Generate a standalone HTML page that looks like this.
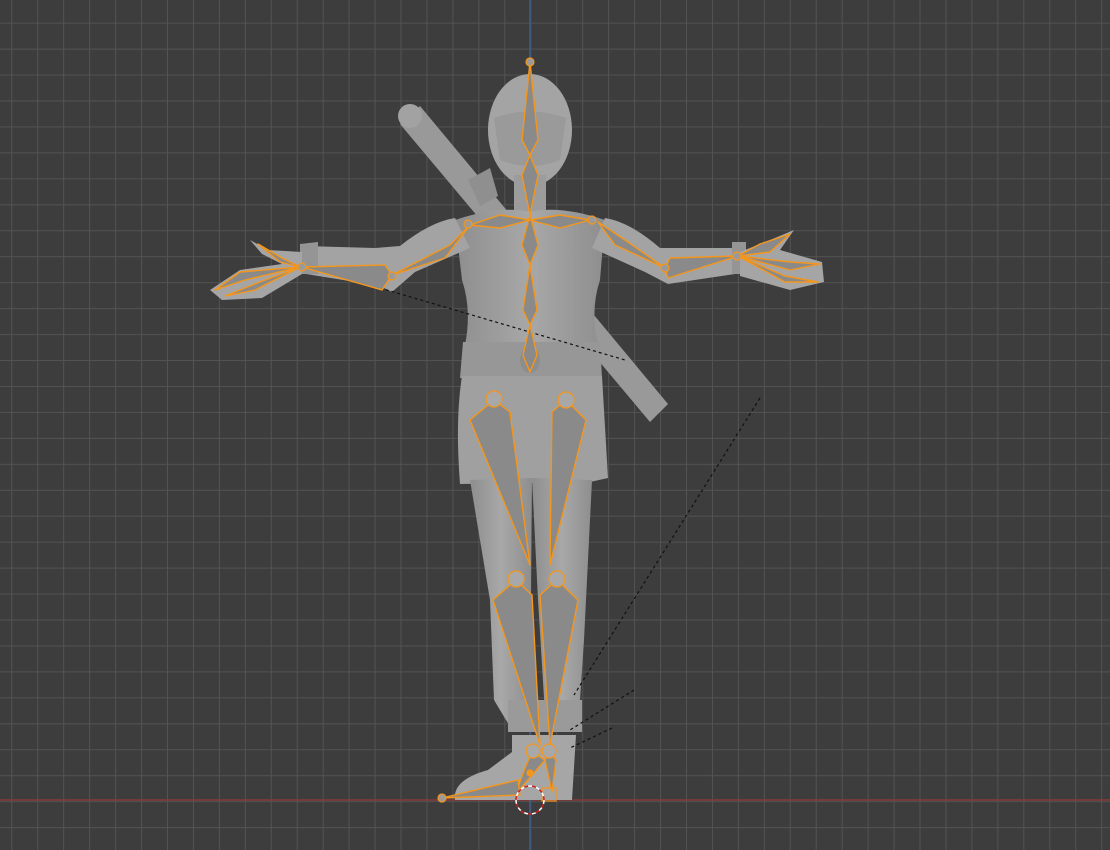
<!DOCTYPE html>
<html><head><style>html,body{margin:0;padding:0;background:#3d3d3d;overflow:hidden}svg{display:block}</style></head>
<body>
<svg width="1110" height="850" viewBox="0 0 1110 850" xmlns="http://www.w3.org/2000/svg">
<defs>
<pattern id="g" x="11.3" y="22.7" width="25.95" height="25.95" patternUnits="userSpaceOnUse">
<path d="M0 0H25.95M0 0V25.95" stroke="#555" stroke-width="1.8" fill="none"/>
</pattern>
<linearGradient id="sk" x1="0" x2="1"><stop offset="0" stop-color="#8e8e8e"/><stop offset="0.5" stop-color="#a8a8a8"/><stop offset="1" stop-color="#8e8e8e"/></linearGradient>
</defs>
<rect width="1110" height="850" fill="#3d3d3d"/>
<rect width="1110" height="850" fill="url(#g)"/>
<line x1="0" y1="800" x2="1110" y2="800" stroke="#8a3a3a" stroke-width="1.5"/>
<line x1="530" y1="0" x2="530" y2="850" stroke="#3d5d8a" stroke-width="1.5"/>
<g fill="#9e9e9e">
<path d="M400 124 L420 106 L668 404 L650 422 Z" fill="#999"/>
<circle cx="410" cy="116" r="12" fill="#a2a2a2"/>
<path d="M468 180 L490 168 L498 196 L480 206 Z" fill="#8f8f8f"/>
<ellipse cx="530" cy="130" rx="42" ry="56" fill="#a4a4a4"/>
<path d="M494 118 Q530 105 566 118 L560 160 Q530 172 500 160 Z" fill="#9a9a9a"/>
<rect x="514" y="175" width="32" height="40" fill="#9c9c9c"/>
<path d="M455 220 Q500 205 530 212 Q560 205 605 220 L600 280 Q590 310 598 345 L465 345 Q472 310 462 280 Z" fill="url(#sk)"/>
<path d="M463 342 L600 342 L602 378 L460 378 Z" fill="#979797"/>
<ellipse cx="530" cy="360" rx="10" ry="13" fill="#8d8d8d"/>
<path d="M462 376 L602 376 L608 478 L590 482 L460 484 Q455 420 462 376 Z" fill="#a0a0a0"/>
<path d="M455 218 L470 248 L415 272 L392 292 L380 286 L306 274 L304 246 L375 248 L400 246 Q430 222 455 218Z" fill="#a3a3a3"/>
<path d="M300 244 L318 242 L318 274 L300 274 Z" fill="#959595"/>
<path d="M302 252 L268 250 L250 240 L262 254 L282 264 L240 270 L210 290 L222 300 L262 298 L302 274 Z" fill="#a5a5a5"/>
<path d="M605 218 L592 248 L645 272 L668 284 L735 274 L736 248 L670 248 L660 248 Q630 222 605 218Z" fill="#a3a3a3"/>
<path d="M732 242 L746 242 L746 274 L732 274 Z" fill="#959595"/>
<path d="M740 252 L770 240 L794 230 L780 250 L822 262 L824 282 L790 290 L740 276 Z" fill="#a5a5a5"/>
<path d="M470 480 L532 478 L530 700 L512 730 L494 700 L490 600 Z" fill="url(#sk)"/>
<path d="M532 478 L592 480 L584 640 L578 730 L546 730 L538 600 Z" fill="url(#sk)"/>
<path d="M508 700 L582 700 L582 732 L508 732 Z" fill="#9a9a9a"/>
<path d="M512 735 L576 735 L572 800 L455 800 Q452 780 488 770 L512 752 Z" fill="#a6a6a6"/>
</g>
<g stroke="#111" stroke-width="1.2" stroke-dasharray="3,3" fill="none">
<path d="M380 288 L625 360"/>
<path d="M760 398 L574 695"/>
<path d="M634 690 L570 730"/>
<path d="M612 728 L570 748"/>
</g>
<g stroke="#f4961c" stroke-width="1.4" fill="#8a8a8a" stroke-linejoin="round">
<path d="M530 62 L538 140 L530 155 L522 140 Z"/>
<path d="M530 155 L538 175 L530 215 L522 175 Z"/>
<path d="M530 215 L538 245 L530 265 L522 245 Z"/>
<path d="M530 265 L537 310 L530 325 L523 310 Z"/>
<path d="M530 325 L537 355 L530 372 L523 355 Z"/>
<path d="M470 225 L500 215 L530 220 L500 228 Z"/>
<path d="M590 220 L560 215 L530 220 L560 228 Z"/>
<path d="M470 225 L450 245 L392 275 L445 258 Z"/>
<path d="M392 275 L385 265 L302 267 L382 290 Z"/>
<path d="M598 222 L615 245 L665 268 L625 240 Z"/>
<path d="M665 268 L670 258 L738 256 L668 278 Z"/>
<path d="M494 400 L510 412 L530 565 L470 420 Z"/>
<path d="M566 400 L586 420 L550 565 L552 412 Z"/>
<path d="M516 580 L532 595 L540 745 L493 600 Z"/>
<path d="M557 580 L578 600 L550 745 L540 595 Z"/>
<path d="M532 752 L545 760 L515 795 L525 768 Z"/>
<path d="M518 780 L520 795 L442 798 Z"/>
<path d="M549 752 L556 760 L552 792 L545 760 Z"/>
<path d="M300 267 L280 262 L258 244 L282 258 Z"/>
<path d="M300 267 L240 272 L215 290 L245 280 Z"/>
<path d="M300 267 L260 282 L225 296 L255 290 Z"/>
<path d="M738 256 L760 244 L790 234 L770 252 Z"/>
<path d="M738 256 L790 262 L820 264 L790 270 Z"/>
<path d="M738 256 L785 276 L818 282 L785 282 Z"/>
</g>
<g fill="#9a9a9a" stroke="#f4961c" stroke-width="1.2">
<circle cx="530" cy="62" r="4"/><circle cx="468" cy="224" r="4"/><circle cx="592" cy="220" r="4"/>
<circle cx="392" cy="276" r="4"/><circle cx="302" cy="267" r="4"/><circle cx="665" cy="268" r="4"/><circle cx="737" cy="256" r="4"/>
<circle cx="494" cy="399" r="8" fill="#a8a8a8"/><circle cx="566" cy="400" r="8" fill="#a8a8a8"/>
<circle cx="516" cy="579" r="8" fill="#a8a8a8"/><circle cx="557" cy="579" r="8" fill="#a8a8a8"/>
<circle cx="533" cy="751" r="7" fill="#a8a8a8"/><circle cx="549" cy="751" r="7" fill="#a8a8a8"/>
<circle cx="442" cy="798" r="4"/><circle cx="530" cy="773" r="3" fill="#f4961c"/>
<rect x="542" y="788" width="14" height="13" fill="none"/>
</g>
<circle cx="530" cy="800" r="14" fill="none" stroke="#fff" stroke-width="1.5" stroke-dasharray="4,4"/>
<circle cx="530" cy="800" r="14" fill="none" stroke="#d02020" stroke-width="1.5" stroke-dasharray="4,4" stroke-dashoffset="4"/>
</svg>
</body></html>
